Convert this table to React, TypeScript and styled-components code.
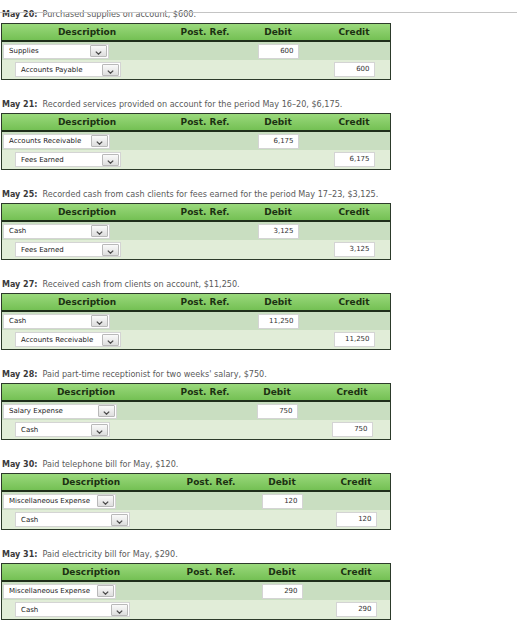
import React from "react";
import styled, { createGlobalStyle, css } from "styled-components";

const GlobalStyle = createGlobalStyle`
  html, body { margin: 0; padding: 0; background: #ffffff; }
  body { font-family: "DejaVu Sans", Verdana, sans-serif; }
`;

type Acct = { name: string; width: number };
type Entry = {
  date: string;
  text: string;
  cols: number[];
  debit: Acct;
  credit: Acct;
  amount: string;
};

const T1 = [170, 66, 80, 72];
const T5 = [168, 70, 74, 76];
const T6 = [178, 62, 80, 68];

const entries: Entry[] = [
  { date: "May 20:", text: "Purchased supplies on account, $600.", cols: T1, debit: { name: "Supplies", width: 106 }, credit: { name: "Accounts Payable", width: 106 }, amount: "600" },
  { date: "May 21:", text: "Recorded services provided on account for the period May 16–20, $6,175.", cols: T1, debit: { name: "Accounts Receivable", width: 107 }, credit: { name: "Fees Earned", width: 106 }, amount: "6,175" },
  { date: "May 25:", text: "Recorded cash from cash clients for fees earned for the period May 17–23, $3,125.", cols: T1, debit: { name: "Cash", width: 107 }, credit: { name: "Fees Earned", width: 106 }, amount: "3,125" },
  { date: "May 27:", text: "Received cash from clients on account, $11,250.", cols: T1, debit: { name: "Cash", width: 107 }, credit: { name: "Accounts Receivable", width: 106 }, amount: "11,250" },
  { date: "May 28:", text: "Paid part-time receptionist for two weeks' salary, $750.", cols: T5, debit: { name: "Salary Expense", width: 114 }, credit: { name: "Cash", width: 95 }, amount: "750" },
  { date: "May 30:", text: "Paid telephone bill for May, $120.", cols: T6, debit: { name: "Miscellaneous Expense", width: 113 }, credit: { name: "Cash", width: 115 }, amount: "120" },
  { date: "May 31:", text: "Paid electricity bill for May, $290.", cols: T6, debit: { name: "Miscellaneous Expense", width: 113 }, credit: { name: "Cash", width: 115 }, amount: "290" },
];

const Page = styled.div`
  display: flex;
  flex-direction: column;
  gap: 16px;
  padding: 6px 0 0 1px;
  width: 516px;
`;

const Section = styled.section`
  display: flex;
  flex-direction: column;
  gap: 3px;
`;

const Title = styled.div<{ $rule?: boolean }>`
  position: relative;
  height: 14px;
  line-height: 12px;
  padding-left: 1px;
  white-space: nowrap;
  ${(p) =>
    p.$rule &&
    css`
      &::after {
        content: "";
        position: absolute;
        left: -1px;
        right: 0;
        top: 6px;
        height: 1px;
        background: #c4c4c4;
      }
    `}
`;

const DateLabel = styled.span`
  font-size: 8px;
  font-weight: bold;
  color: #3a3a3a;
  margin-right: 5px;
`;

const Desc = styled.span`
  font-size: 8.1px;
  color: #5a5a5a;
`;

const Table = styled.div`
  width: 388px;
  border: 1px solid #2c3a2a;
  display: flex;
  flex-direction: column;
`;

const Row = styled.div<{ $cols: number[]; $kind: "head" | "dr" | "cr" }>`
  display: grid;
  grid-template-columns: ${(p) => p.$cols.map((c) => `${c}px`).join(" ")};
  align-items: center;
  ${(p) =>
    p.$kind === "head"
      ? css`
          height: 16px;
          border-bottom: 2px solid #1f2e1b;
          background: linear-gradient(#9ad97c, #74c054);
        `
      : p.$kind === "dr"
      ? css`
          height: 18px;
          background: #c9dec1;
        `
      : css`
          height: 19px;
          background: #e1edd8;
        `}
`;

const HeadCell = styled.div`
  text-align: center;
  font-size: 9px;
  font-weight: bold;
  color: #1c3112;
  line-height: 16px;
`;

const Cell = styled.div<{ $indent?: number; $center?: boolean }>`
  display: flex;
  align-items: center;
  justify-content: ${(p) => (p.$center ? "center" : "flex-start")};
  padding-left: ${(p) => p.$indent ?? 0}px;
`;

const Select = styled.div<{ $w: number }>`
  width: ${(p) => p.$w}px;
  height: 15px;
  box-sizing: border-box;
  background: #ffffff;
  border: 1px solid #d4d4d4;
  display: flex;
  align-items: center;
  justify-content: space-between;
  padding: 0 1px 0 5px;
`;

const SelectText = styled.span`
  font-size: 7px;
  color: #222222;
  white-space: nowrap;
`;

const DropButton = styled.div`
  width: 17px;
  height: 12px;
  box-sizing: border-box;
  border: 1px solid #b9b9b9;
  border-radius: 1px;
  background: linear-gradient(#fafafa, #dedede);
  display: flex;
  align-items: flex-end;
  justify-content: center;
  padding-bottom: 1px;
`;

const Amount = styled.div`
  width: 41px;
  height: 15px;
  box-sizing: border-box;
  background: #ffffff;
  border: 1px solid #d4d4d4;
  font-size: 7px;
  color: #333333;
  text-align: right;
  padding-right: 4px;
  line-height: 13px;
`;

const Chevron = () => (
  <svg width="7" height="4" viewBox="0 0 7 4">
    <path d="M0.8 0.6 L3.5 3.2 L6.2 0.6" fill="none" stroke="#4a4a4a" strokeWidth="1.3" />
  </svg>
);

const AcctSelect = ({ acct }: { acct: Acct }) => (
  <Select $w={acct.width}>
    <SelectText>{acct.name}</SelectText>
    <DropButton>
      <Chevron />
    </DropButton>
  </Select>
);

const Journal = ({ e, first }: { e: Entry; first: boolean }) => (
  <Section>
    <Title $rule={first}>
      <DateLabel>{e.date}</DateLabel>
      <Desc>{e.text}</Desc>
    </Title>
    <Table>
      <Row $cols={e.cols} $kind="head">
        <HeadCell>Description</HeadCell>
        <HeadCell>Post. Ref.</HeadCell>
        <HeadCell>Debit</HeadCell>
        <HeadCell>Credit</HeadCell>
      </Row>
      <Row $cols={e.cols} $kind="dr">
        <Cell $indent={1}>
          <AcctSelect acct={e.debit} />
        </Cell>
        <Cell />
        <Cell $center>
          <Amount>{e.amount}</Amount>
        </Cell>
        <Cell />
      </Row>
      <Row $cols={e.cols} $kind="cr">
        <Cell $indent={13}>
          <AcctSelect acct={e.credit} />
        </Cell>
        <Cell />
        <Cell />
        <Cell $center>
          <Amount>{e.amount}</Amount>
        </Cell>
      </Row>
    </Table>
  </Section>
);

export default function App() {
  return (
    <>
      <GlobalStyle />
      <Page>
        {entries.map((e, i) => (
          <Journal key={e.date + i} e={e} first={i === 0} />
        ))}
      </Page>
    </>
  );
}
